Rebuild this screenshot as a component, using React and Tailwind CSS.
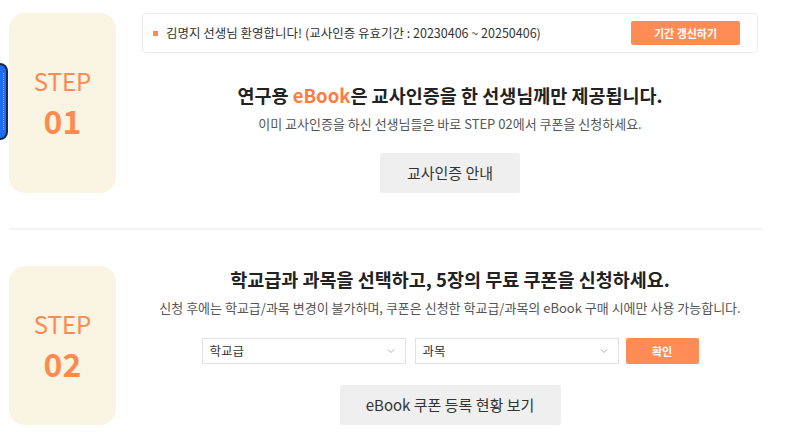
import React from 'react';
import { ChevronDown } from 'lucide-react';

const StepBox = ({ num }) => {
    return (
        <div className='w-[107px] shrink-0 rounded-[16px] bg-[#faf4e2] flex flex-col items-center justify-center text-[#ff8a4f]'>
            <p className='text-[24px] leading-[30px] font-normal'>STEP</p>
            <p className='text-[32px] leading-[40px] font-bold mt-[4px]'>{num}</p>
        </div>
    );
};

const Select = ({ label }) => {
    return (
        <div className='w-[204px] h-[26px] border border-[#e2e2e2] bg-white flex items-center justify-between pl-[7px] pr-[8px]'>
            <span className='text-[12.5px] text-[#333]'>{label}</span>
            <ChevronDown size={12} strokeWidth={1.3} className='text-[#888]' />
        </div>
    );
};

const App = () => {
    return (
        <div className="relative w-[800px] h-[448px] bg-white overflow-hidden font-['Noto_Sans_CJK_KR','Noto_Sans',sans-serif] text-[#222]">
            <div className='absolute left-0 top-[63px] w-[8px] h-[77px] bg-[#1f6bf2] border-2 border-l-0 border-[#1c2742] rounded-r-[8px] flex justify-center py-[8px]'>
                <div className='h-full border-l border-dotted border-[#9cc0ff]'></div>
            </div>

            <div className='pl-[9px] pt-[13px] w-[762px]'>
                <div className='flex gap-[26px]'>
                    <StepBox num='01' />
                    <div className='w-[616px] flex flex-col items-center'>
                        <div className='w-full h-[40px] border border-[#ececec] rounded-[4px] flex items-center justify-between pl-[10px] pr-[17px]'>
                            <div className='flex items-center'>
                                <span className='w-[5px] h-[5px] bg-[#ff8a4f] mr-[8px]'></span>
                                <span className='text-[12.5px] text-[#333]'>김명지 선생님 환영합니다! (교사인증 유효기간 : 20230406 ~ 20250406)</span>
                            </div>
                            <button className='w-[109px] h-[24px] bg-[#ff8c55] rounded-[2px] text-white text-[11px] font-bold'>기간 갱신하기</button>
                        </div>
                        <p className='mt-[28px] text-[18.5px] leading-[28px] font-bold text-[#222] whitespace-nowrap'>
                            연구용 <span className='text-[#ff7b3f]'>eBook</span>은 교사인증을 한 선생님께만 제공됩니다.
                        </p>
                        <p className='mt-[5px] text-[13px] leading-[20px] text-[#555] whitespace-nowrap'>이미 교사인증을 하신 선생님들은 바로 STEP 02에서 쿠폰을 신청하세요.</p>
                        <button className='mt-[19px] w-[140px] h-[40px] bg-[#efefef] rounded-[2px] text-[15px] text-[#333]'>교사인증 안내</button>
                    </div>
                </div>

                <div className='mt-[35px] h-[2px] bg-[#f4f4f4]'></div>

                <div className='mt-[36px] flex gap-[26px]'>
                    <StepBox num='02' />
                    <div className='w-[616px] flex flex-col items-center'>
                        <p className='-mt-[1px] text-[18.5px] leading-[28px] font-bold text-[#222] whitespace-nowrap'>학교급과 과목을 선택하고, 5장의 무료 쿠폰을 신청하세요.</p>
                        <p className='mt-[5px] text-[13px] leading-[20px] text-[#555] whitespace-nowrap'>신청 후에는 학교급/과목 변경이 불가하며, 쿠폰은 신청한 학교급/과목의 eBook 구매 시에만 사용 가능합니다.</p>
                        <div className='mt-[20px] flex items-center'>
                            <Select label='학교급' />
                            <div className='ml-[9px]'>
                                <Select label='과목' />
                            </div>
                            <button className='ml-[7px] w-[73px] h-[26px] bg-[#ff8c55] rounded-[2px] text-white text-[11px] font-bold'>확인</button>
                        </div>
                        <button className='mt-[21px] w-[221px] h-[40px] bg-[#efefef] rounded-[2px] text-[15px] text-[#333]'>eBook 쿠폰 등록 현황 보기</button>
                    </div>
                </div>
            </div>
        </div>
    );
};

export default App;
